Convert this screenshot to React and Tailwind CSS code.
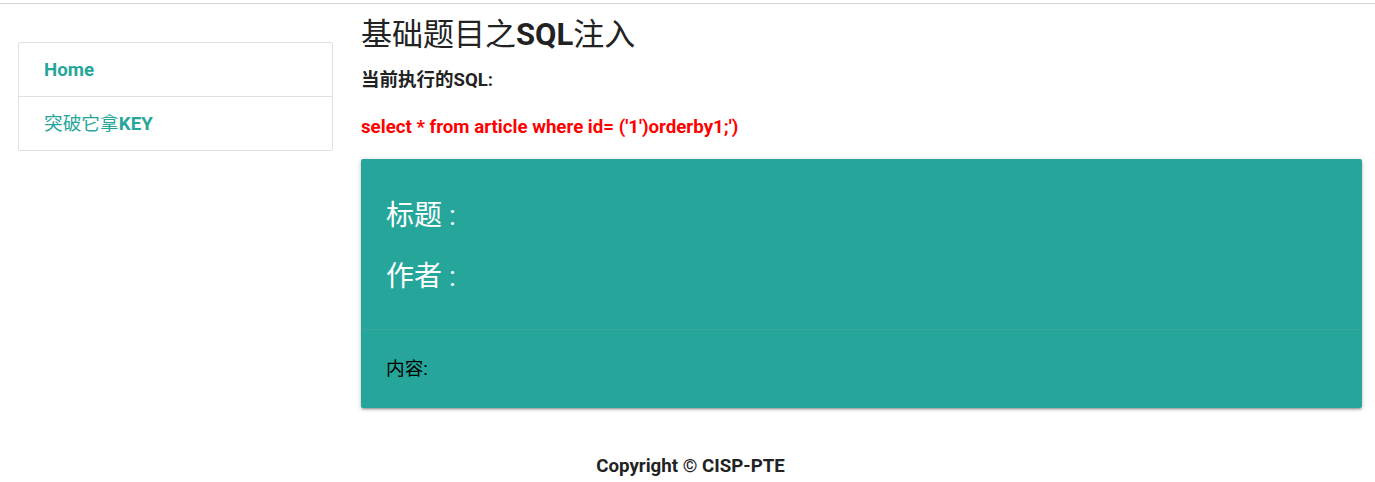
export default function App() {
  const font = { fontFamily: 'Roboto, "Noto Sans CJK SC", sans-serif' };
  return (
    <div className="w-[1375px] h-[482px] bg-white text-[#222] overflow-hidden" style={font}>
      <div className="h-[4px] border-b border-[#d4d4d4]" />
      <div className="flex pl-[18px] pr-[13px] gap-[28px]">
        <div className="w-[315px] shrink-0 mt-[38px]">
          <div className="border border-[#e0e0e0] rounded-[2px]">
            <div className="h-[54px] pt-[2px] pl-[25px] flex items-center text-[18.7px] font-bold text-[#26a69a] border-b border-[#e0e0e0]">
              Home
            </div>
            <div className="h-[53px] pt-[2px] pl-[25px] flex items-center text-[18.7px] text-[#26a69a]">
              突破它拿<span className="font-bold">KEY</span>
            </div>
          </div>
        </div>
        <div className="flex-1">
          <h1 className="mt-[14px] text-[31px] leading-[34px] text-[#222]">
            基础题目之<span className="font-bold">SQL</span>注入
          </h1>
          <div className="mt-[16px] text-[18.5px] leading-[24px] font-bold text-[#222]">当前执行的SQL:</div>
          <div className="mt-[23px] text-[18.7px] leading-[24px] font-bold text-[#ff0000]">
            select * from article where id= ('1')orderby1;')
          </div>
          <div className="mt-[20px] bg-[#26a69a] rounded-[2px] shadow-[0_2px_2px_0_rgba(0,0,0,0.14),0_3px_1px_-2px_rgba(0,0,0,0.12),0_1px_5px_0_rgba(0,0,0,0.2)]">
            <div className="px-[25px] pt-[26px] pb-[22px] text-white text-[28px] leading-[61px]">
              <div>标题 :</div>
              <div>作者 :</div>
            </div>
            <div className="border-t border-[rgba(160,160,160,0.2)] px-[25px] py-[24px] text-[18.7px] leading-[30px] text-black">
              内容:
            </div>
          </div>
        </div>
      </div>
      <div className="mt-[46px] text-center text-[18.7px] leading-[24px] font-bold text-[#222] pl-[6px]">
        Copyright © CISP-PTE
      </div>
    </div>
  );
}
